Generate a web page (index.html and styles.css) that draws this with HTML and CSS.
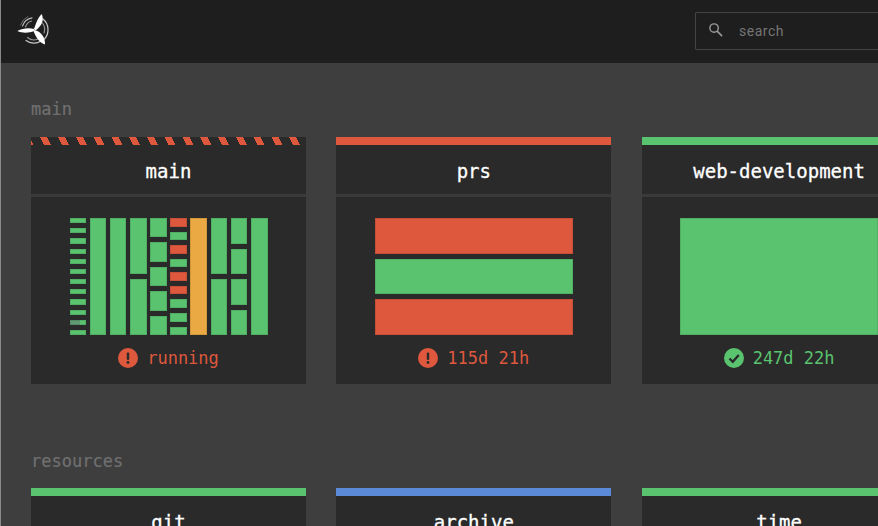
FILE: index.html
```html
<!DOCTYPE html>
<html lang="en">
<head>
    <meta charset="utf-8">
    <meta name="viewport" content="width=device-width, initial-scale=1">
    <title>Jobsets</title>
    <link rel="stylesheet" href="styles.css">
</head>
<body>
<header class="topbar">
    <svg class="logo" viewBox="0 0 34 34" aria-label="logo">
        <g fill="none" stroke="#fff" stroke-linecap="round">
            <path d="M5.500 13 A12 12 0 0 1 15 4.900" stroke-width="1.100" opacity=".7"/>
            <path d="M8.500 14 A9 9 0 0 1 14.500 8" stroke-width="1.100" opacity=".55"/>
            <path d="M3.500 12 A14.500 14.500 0 0 1 11 3.500" stroke-width="1" opacity=".35"/>
            <path d="M26 6 A14 14 0 0 1 27.500 26" stroke-width="1.200" opacity=".75"/>
            <path d="M25.500 10 A10.500 10.500 0 0 1 27 20" stroke-width="1.100" opacity=".55"/>
            <path d="M9 27.500 A13 13 0 0 0 24 28" stroke-width="1.200" opacity=".75"/>
            <path d="M10.500 24.500 A10 10 0 0 0 21 26" stroke-width="1.100" opacity=".55"/>
        </g>
        <g fill="#fff">
            <path d="M17 16 C13 14.800 6 14.800 .3 18 C5 20.300 12 20.300 17 18 Z"/>
            <path d="M16.800 16 C19 12 19.500 6 24.700 1 C27 6 26 12 18.500 17.500 Z"/>
            <path d="M17 17 C22 17.500 28.500 23 28 31.500 C23 30 19 25 16.500 18 Z"/>
        </g>
    </svg>
    <div class="search">
        <svg class="search-icon" viewBox="0 0 16 16">
            <circle cx="6.500" cy="6.500" r="4.500" fill="none" stroke="#9a9a9a" stroke-width="1.500"/>
            <path d="M10 10 L14.500 14.500" stroke="#9a9a9a" stroke-width="1.700" stroke-linecap="round"/>
        </svg>
        <span class="search-text">search</span>
    </div>
</header>

<main class="content">
    <section class="group">
        <h2 class="group-title">main</h2>
        <div class="cards">
            <div class="card">
                <div class="stripe running"></div>
                <div class="card-title">main</div>
                <div class="card-body">
                    <div class="bars">
                        <div class="col">
                            <i class="ok"></i><i class="ok"></i><i class="ok"></i><i class="ok"></i>
                            <i class="ok"></i><i class="ok"></i><i class="ok"></i><i class="ok"></i>
                            <i class="ok"></i><i class="ok"></i><i class="progress"></i><i class="ok"></i>
                        </div>
                        <div class="col"><i class="ok"></i></div>
                        <div class="col"><i class="ok"></i></div>
                        <div class="col"><i class="ok"></i><i class="ok"></i></div>
                        <div class="col">
                            <i class="ok"></i><i class="ok"></i><i class="ok"></i><i class="ok"></i><i class="ok"></i>
                        </div>
                        <div class="col">
                            <i class="bad"></i><i class="ok"></i><i class="bad"></i><i class="ok"></i>
                            <i class="bad"></i><i class="bad"></i><i class="ok"></i><i class="ok"></i><i class="ok"></i>
                        </div>
                        <div class="col"><i class="warn"></i></div>
                        <div class="col"><i class="ok"></i><i class="ok"></i></div>
                        <div class="col"><i class="ok"></i><i class="ok"></i><i class="ok"></i><i class="ok"></i></div>
                        <div class="col"><i class="ok"></i></div>
                    </div>
                    <div class="status red">
                        <svg class="status-icon" viewBox="0 0 20 20">
                            <circle cx="10" cy="10" r="10" fill="#de583e"/>
                            <rect x="8.800" y="4.500" width="2.400" height="7.500" rx="1" fill="#2a2a2a"/>
                            <circle cx="10" cy="14.500" r="1.400" fill="#2a2a2a"/>
                        </svg>
                        running
                    </div>
                </div>
            </div>

            <div class="card">
                <div class="stripe red-bg"></div>
                <div class="card-title">prs</div>
                <div class="card-body">
                    <div class="bars">
                        <div class="col"><i class="bad"></i><i class="ok"></i><i class="bad"></i></div>
                    </div>
                    <div class="status red">
                        <svg class="status-icon" viewBox="0 0 20 20">
                            <circle cx="10" cy="10" r="10" fill="#de583e"/>
                            <rect x="8.800" y="4.500" width="2.400" height="7.500" rx="1" fill="#2a2a2a"/>
                            <circle cx="10" cy="14.500" r="1.400" fill="#2a2a2a"/>
                        </svg>
                        115d 21h
                    </div>
                </div>
            </div>

            <div class="card">
                <div class="stripe green-bg"></div>
                <div class="card-title">web-development</div>
                <div class="card-body">
                    <div class="bars">
                        <div class="col"><i class="ok"></i></div>
                    </div>
                    <div class="status green">
                        <svg class="status-icon" viewBox="0 0 20 20">
                            <circle cx="10" cy="10" r="10" fill="#5ac36f"/>
                            <path d="M5.500 10.500 L8.800 13.800 L14.800 7" fill="none" stroke="#2a2a2a" stroke-width="2.400"/>
                        </svg>
                        247d 22h
                    </div>
                </div>
            </div>
        </div>
    </section>

    <section class="group">
        <h2 class="group-title">resources</h2>
        <div class="cards">
            <div class="card">
                <div class="stripe green-bg"></div>
                <div class="card-title">git</div>
            </div>
            <div class="card">
                <div class="stripe blue-bg"></div>
                <div class="card-title">archive</div>
            </div>
            <div class="card">
                <div class="stripe green-bg"></div>
                <div class="card-title">time</div>
            </div>
        </div>
    </section>
</main>
</body>
</html>
```

FILE: styles.css
```css
html, body {
    margin: 0;
    height: 100%;
    overflow: hidden;
}
body {
    background-color: #3e3e3e;
    border-left: 1px solid #8a8a8a;
    box-sizing: border-box;
    font-family: "DejaVu Sans Mono", monospace;
}

.topbar {
    display: flex;
    align-items: center;
    height: 63px;
    padding-left: 16px;
    background-color: #1e1e1e;
}
.logo {
    width: 34px;
    height: 34px;
    margin-bottom: 3px;
}
.search {
    display: flex;
    align-items: center;
    box-sizing: border-box;
    width: 240px;
    height: 38px;
    margin-left: auto;
    margin-right: -57px;
    margin-bottom: 2px;
    padding-left: 12px;
    border: 1px solid #444;
    border-radius: 1px;
}
.search-icon {
    width: 15px;
    height: 15px;
    margin-top: -3px;
}
.search-text {
    margin-left: 16px;
    color: #757575;
    font-family: Roboto, sans-serif;
    font-size: 14px;
    letter-spacing: 0.5px;
}

.content {
    padding: 36px 0 0 30px;
}
.group {
    margin-bottom: 67px;
}
.group-title {
    margin: 0 0 18px;
    color: #707070;
    font-size: 17px;
    font-weight: normal;
    line-height: 20px;
    -webkit-text-stroke: 0.2px #707070;
}
.group + .group .group-title {
    margin-bottom: 17px;
}
.cards {
    display: grid;
    grid-template-columns: repeat(3, 275px);
    column-gap: 30.300px;
}
.card {
    background-color: #2a2a2a;
}
.stripe {
    height: 8px;
}
.stripe.running {
    background-image: repeating-linear-gradient(63.400deg, #de583e 0, #de583e 2.200px, transparent 2.200px, transparent 11.800px, #de583e 11.800px, #de583e 15.900px);
}
.red-bg { background-color: #de583e; }
.green-bg { background-color: #5ac36f; }
.blue-bg { background-color: #5b8bd8; }

.card-title {
    height: 49px;
    border-bottom: 3px solid #3a3a3a;
    color: #fff;
    font-size: 19px;
    line-height: 52px;
    text-align: center;
    -webkit-text-stroke: 0.3px #fff;
}
.card-body {
    height: 187px;
    overflow: hidden;
}
.bars {
    display: flex;
    gap: 3.500px;
    width: 198px;
    height: 117px;
    margin: 21px auto 0;
}
.col {
    display: flex;
    flex: 1;
    flex-direction: column;
    gap: 5px;
}
.col i {
    flex: 1;
    display: block;
    box-shadow: inset 0 0 0 1px rgba(0, 0, 0, 0.1);
}
.ok { background-color: #5ac36f; }
.bad { background-color: #de583e; }
.warn { background-color: #eaa942; }
.progress {
    background-image: linear-gradient(90deg, #5f9a72 65%, #5ac36f 65%);
}

.status {
    display: flex;
    align-items: center;
    justify-content: center;
    gap: 9px;
    margin-top: 13px;
    font-size: 17px;
    line-height: 20px;
}
.status-icon {
    width: 20px;
    height: 20px;
}
.red { color: #de583e; }
.green { color: #5ac36f; }
```
